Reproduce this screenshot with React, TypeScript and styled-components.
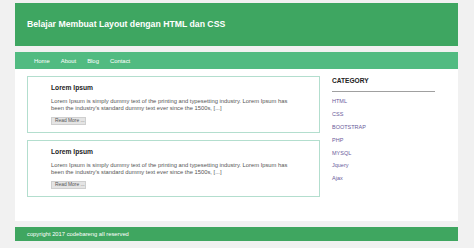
import React from 'react'
import styled, { createGlobalStyle } from 'styled-components'

const GlobalStyle = createGlobalStyle`
  html, body {
    margin: 0;
    padding: 0;
    background: #f1f1f1;
    font-family: 'Liberation Sans', Arial, sans-serif;
  }
`

const Page = styled.div`
  width: 443px;
  margin-left: 15px;
  padding-top: 3px;
  display: flex;
  flex-direction: column;
`

const Header = styled.header`
  height: 43px;
  background: #3ea661;
  display: flex;
  align-items: center;
  padding-left: 12px;
  padding-bottom: 2px;
  box-sizing: border-box;
`

const Title = styled.h1`
  margin: 0;
  color: #fff;
  font-size: 8.7px;
  font-weight: bold;
`

const Nav = styled.nav`
  margin-top: 6px;
  height: 17px;
  background: #51bb81;
  display: flex;
  align-items: center;
  padding-left: 19px;
  gap: 11px;
`

const NavLink = styled.a`
  color: #fff;
  font-size: 5.9px;
  text-decoration: none;
`

const Content = styled.main`
  background: #fff;
  height: 152px;
  display: flex;
  padding: 7px 0 0 12px;
  box-sizing: border-box;
  gap: 12px;
`

const Articles = styled.section`
  width: 293px;
  display: flex;
  flex-direction: column;
  gap: 7px;
`

const Article = styled.article`
  height: 57px;
  box-sizing: border-box;
  border: 1px solid #b3dece;
  padding: 7px 23px 0 23px;
`

const ArticleTitle = styled.h2`
  margin: 0;
  font-size: 6.7px;
  font-weight: bold;
  color: #222;
`

const Text = styled.p`
  margin: 7px 0 0;
  font-size: 5.8px;
  line-height: 7.3px;
  color: #555;
`

const ReadMore = styled.button`
  margin-top: 4px;
  height: 8px;
  width: 35px;
  padding: 0 0 0 3px;
  border: 1px solid #cfcfcf;
  background: #e4e4e4;
  color: #555;
  font-family: inherit;
  font-size: 4.9px;
  text-align: left;
  display: block;
`

const Sidebar = styled.aside`
  width: 103px;
  padding-top: 1px;
`

const SideTitle = styled.h3`
  margin: 0;
  font-size: 6.6px;
  font-weight: bold;
  color: #222;
  padding-bottom: 7px;
  border-bottom: 1.5px solid #a0a0a0;
`

const CatList = styled.ul`
  list-style: none;
  margin: 3px 0 0;
  padding: 0;
`

const CatItem = styled.li`
  height: 12.8px;
  display: flex;
  align-items: center;
  font-size: 5.5px;
  color: #6a5a9a;
`

const Footer = styled.footer`
  margin-top: 6px;
  height: 14px;
  background: #3fa660;
  display: flex;
  align-items: center;
  padding-left: 12px;
`

const FooterText = styled.span`
  color: #fff;
  font-size: 5.8px;
`

const posts = [1, 2]
const cats = ['HTML', 'CSS', 'BOOTSTRAP', 'PHP', 'MYSQL', 'Jquery', 'Ajax']

export default function App() {
  return (
    <>
      <GlobalStyle />
      <Page>
        <Header>
          <Title>Belajar Membuat Layout dengan HTML dan CSS</Title>
        </Header>
        <Nav>
          {['Home', 'About', 'Blog', 'Contact'].map((n) => (
            <NavLink key={n} href="#">
              {n}
            </NavLink>
          ))}
        </Nav>
        <Content>
          <Articles>
            {posts.map((p) => (
              <Article key={p}>
                <ArticleTitle>Lorem Ipsum</ArticleTitle>
                <Text>
                  Lorem Ipsum is simply dummy text of the printing and typesetting industry. Lorem Ipsum has
                  been the industry's standard dummy text ever since the 1500s, [...]
                </Text>
                <ReadMore>Read More ...</ReadMore>
              </Article>
            ))}
          </Articles>
          <Sidebar>
            <SideTitle>CATEGORY</SideTitle>
            <CatList>
              {cats.map((c) => (
                <CatItem key={c}>{c}</CatItem>
              ))}
            </CatList>
          </Sidebar>
        </Content>
        <Footer>
          <FooterText>copyright 2017 codebareng all reserved</FooterText>
        </Footer>
      </Page>
    </>
  )
}
